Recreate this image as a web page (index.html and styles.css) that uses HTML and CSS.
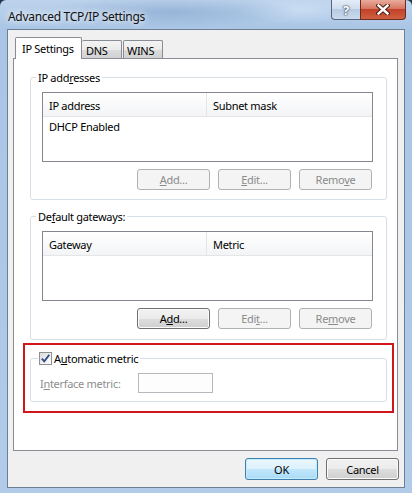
FILE: index.html
```html
<!DOCTYPE html>
<html lang="en">
<head>
    <meta charset="UTF-8">
    <meta name="viewport" content="width=device-width, initial-scale=1.0">
    <title>Advanced TCP/IP Settings</title>
    <link rel="stylesheet" href="styles.css">
</head>
<body>
    <div class="window">
        <div class="titlebar">
            <span class="title">Advanced TCP/IP Settings</span>
            <div class="caption-btns">
                <div class="cap help">?</div>
                <div class="cap close">
                    <svg width="14" height="11" viewBox="0 0 14 11">
                        <path d="M2.5 1.5 L11.5 9.5 M11.5 1.5 L2.5 9.5" stroke="#4b1d14" stroke-width="4.4" stroke-linecap="square"/>
                        <path d="M2.5 1.5 L11.5 9.5 M11.5 1.5 L2.5 9.5" stroke="#fff" stroke-width="2.4" stroke-linecap="square"/>
                    </svg>
                </div>
            </div>
        </div>
        <div class="client">
            <div class="tabs">
                <div class="tab active">IP Settings</div>
                <div class="tab dns">DNS</div>
                <div class="tab wins">WINS</div>
            </div>
            <div class="panel">
                <fieldset class="group">
                    <legend>IP add<u>r</u>esses</legend>
                    <div class="list">
                        <div class="list-head">
                            <div class="col c1">IP address</div>
                            <div class="col">Subnet mask</div>
                        </div>
                        <div class="row">DHCP Enabled</div>
                    </div>
                    <div class="btn-row">
                        <button class="btn" disabled><u>A</u>dd...</button>
                        <button class="btn" disabled><u>E</u>dit...</button>
                        <button class="btn" disabled>Remo<u>v</u>e</button>
                    </div>
                </fieldset>
                <fieldset class="group second">
                    <legend>De<u>f</u>ault gateways:</legend>
                    <div class="list">
                        <div class="list-head">
                            <div class="col c1">Gateway</div>
                            <div class="col">Metric</div>
                        </div>
                    </div>
                    <div class="btn-row">
                        <button class="btn">A<u>d</u>d...</button>
                        <button class="btn" disabled>Edi<u>t</u>...</button>
                        <button class="btn" disabled>Re<u>m</u>ove</button>
                    </div>
                </fieldset>
                <div class="highlight">
                    <fieldset class="group metric">
                        <legend>
                            <span class="check">
                                <svg width="11" height="11" viewBox="0 0 11 11">
                                    <path d="M1.8 5.6 L4.3 8.3 L9.3 1.8" fill="none" stroke="#2d4a88" stroke-width="1.8"/>
                                </svg>
                            </span>
                            A<u>u</u>tomatic metric
                        </legend>
                        <div class="metric-row">
                            <span class="metric-label">I<u>n</u>terface metric:</span>
                            <div class="textbox"></div>
                        </div>
                    </fieldset>
                </div>
            </div>
            <div class="dialog-btns">
                <button class="btn ok">OK</button>
                <button class="btn">Cancel</button>
            </div>
        </div>
    </div>
</body>
</html>
```

FILE: styles.css
```css
body{
    margin: 0;
    background: #26364a;
    font-family: "Noto Sans", "DejaVu Sans", sans-serif;
    font-size: 11px;
    letter-spacing: -0.3px;
    color: #000;
}
.window{
    width: 412px;
    height: 493px;
    display: flex;
    flex-direction: column;
    border-radius: 6px 6px 0 0;
    overflow: hidden;
    background:
        radial-gradient(ellipse 130px 16px at 170px 12px, rgba(95,135,185,.35), transparent),
        radial-gradient(ellipse 60px 14px at 300px 10px, rgba(220,235,250,.5), transparent),
        linear-gradient(180deg, #bdd3ec 0, #a9c5e5 30px, #b1cbe9 100%);
}
.titlebar{
    height: 29px;
    flex-shrink: 0;
    display: flex;
    justify-content: space-between;
}
.title{
    padding: 9px 0 0 8px;
    font-size: 12px;
    line-height: 15px;
    color: #111;
    text-shadow: 0 0 6px #fff, 0 0 10px rgba(255,255,255,.8);
}
.caption-btns{
    display: flex;
    align-self: flex-start;
    margin-right: 6px;
}
.cap{
    height: 20px;
    box-sizing: border-box;
    border: 1px solid #55677f;
    border-top: none;
    display: flex;
    align-items: center;
    justify-content: center;
}
.help{
    width: 29px;
    border-right: none;
    border-radius: 0 0 0 4px;
    background: linear-gradient(#e4ecf6, #d0ddee 45%, #b7cbe3 50%, #cbdbee);
    color: #fff;
    font-weight: bold;
    font-size: 13px;
    text-shadow: 0 0 1px #3b4a60, 0 0 1px #3b4a60, 0 0 2px #3b4a60;
}
.close{
    width: 46px;
    border-radius: 0 0 4px 0;
    border-color: #6e2a1e;
    background: linear-gradient(#e9ab9c, #d77762 45%, #c2412a 50%, #d0603f);
}
.client{
    flex: 1;
    margin: 0 7px 5px;
    border: 1px solid #6d7f93;
    background: #f0f0f0;
    padding: 7px 5px 0 5px;
    display: flex;
    flex-direction: column;
}
.tabs{
    height: 21px;
    display: flex;
    align-items: flex-end;
    margin-left: 2px;
}
.tab{
    box-sizing: border-box;
    height: 18px;
    line-height: 15px;
    padding: 2px 0 0 3px;
    border: 1px solid #898c95;
    border-bottom: none;
    border-radius: 2px 2px 0 0;
    background: linear-gradient(#f3f3f3, #ebebeb 50%, #dcdcdc 51%, #d2d2d2);
}
.tab.active{
    width: 67px;
    height: 22px;
    margin-bottom: -1px;
    padding: 3px 0 0 6px;
    background: #fff;
    position: relative;
}
.tab.dns{
    width: 40px;
    border-left: none;
    padding-left: 4px;
}
.tab.wins{
    width: 40px;
    margin-left: 1px;
}
.panel{
    height: 393px;
    box-sizing: border-box;
    margin-right: 1px;
    border: 1px solid #898c95;
    background: #fff;
    padding: 11px 10px 0 16px;
}
.group{
    margin: 0;
    min-width: 0;
    border: 1px solid #d5dfe5;
    border-radius: 3px;
    padding: 7px 13px 9px 11px;
}
.group legend{
    padding: 0 2px;
    margin-left: -6px;
    line-height: 15px;
}
.group.second{
    margin-top: 9px;
    padding-bottom: 10px;
}
.list{
    height: 70px;
    box-sizing: border-box;
    border: 1px solid #828790;
    background: #fff;
}
.list-head{
    display: flex;
    height: 23px;
    border-bottom: 1px solid #e5e5e5;
    background: linear-gradient(#fff, #f3f4f6);
}
.col{
    line-height: 25px;
    padding-left: 6px;
}
.col.c1{
    width: 157px;
    border-right: 1px solid #e5e5e5;
}
.row{
    line-height: 20px;
    padding-left: 6px;
}
.btn-row{
    display: flex;
    justify-content: flex-end;
    gap: 8px;
    margin-top: 7px;
    margin-right: 1px;
}
.btn{
    width: 73px;
    height: 21px;
    padding: 0;
    font: inherit;
    letter-spacing: inherit;
    color: #000;
    border: 1px solid #707070;
    border-radius: 3px;
    background: linear-gradient(#f2f2f2, #ebebeb 50%, #dddddd 51%, #cfcfcf);
    box-shadow: inset 0 0 0 1px #fbfbfb;
}
.btn:disabled{
    color: #8b8b8b;
    border-color: #adb2b5;
    background: #f4f4f4;
    box-shadow: none;
}
.highlight{
    margin: 3px -7px 0 -7px;
    border: 2px solid #d3161c;
    padding: 6px 5px 9px 5px;
}
.group.metric{
    padding: 7px 10px 8px 9px;
}
.group.metric legend{
    margin-left: -2px;
    padding: 0 2px 0 1px;
    display: flex;
    align-items: center;
}
.check{
    width: 13px;
    height: 13px;
    box-sizing: border-box;
    margin-right: 2px;
    border: 1px solid #8e8f8f;
    background: linear-gradient(135deg, #dcdcdc, #fdfdfd);
    display: flex;
    align-items: center;
    justify-content: center;
}
.metric-row{
    display: flex;
    align-items: center;
}
.metric-label{
    width: 98px;
    color: #8d8d8d;
}
.textbox{
    width: 75px;
    height: 20px;
    box-sizing: border-box;
    border: 1px solid #b5b9bd;
    background: #fdfdfd;
}
.dialog-btns{
    display: flex;
    justify-content: flex-end;
    gap: 8px;
    margin-top: 7px;
}
.dialog-btns .btn{
    height: 22px;
}
.btn.ok{
    border-color: #3c7fb1;
    background: linear-gradient(#ecf7fd, #dcf1fc 50%, #c1e7fc 51%, #a9daf5);
    box-shadow: inset 0 0 0 1px #c7ebfc;
}
```
